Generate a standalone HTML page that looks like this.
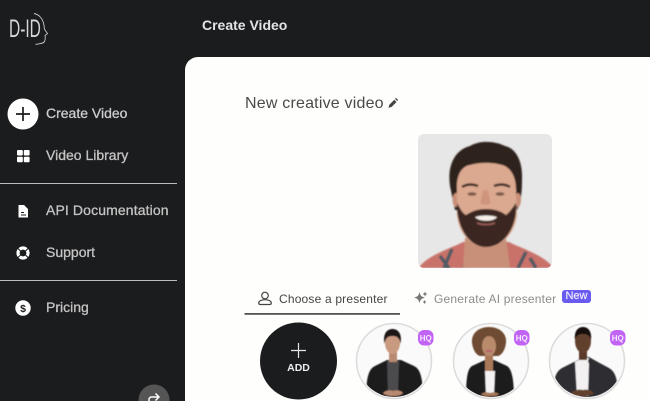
<!DOCTYPE html>
<html lang="en">
<head>
<meta charset="utf-8">
<title>Create Video</title>
<style>
html,body{margin:0;padding:0;width:650px;height:401px;overflow:hidden;background:#1b1c1e}
body{position:relative;font-family:"Liberation Sans",sans-serif}
.t{position:absolute;white-space:nowrap;line-height:16px;z-index:2}
.n{left:46px;font-size:14px;color:#c4c4c4;font-weight:400;-webkit-text-stroke:.3px #c4c4c4}
.panel{position:absolute;left:185px;top:57px;width:465px;height:344px;background:#fefefd;border-top-left-radius:13px}
.hr{position:absolute;left:0;width:177px;height:1px;background:#bdbdbd}
svg.a{position:absolute;left:0;top:0}
</style>
</head>
<body>
<div class="panel"></div>
<div class="hr" style="top:183px"></div>
<div class="hr" style="top:280px"></div>

<div class="t" style="left:9px;top:15px;font-size:25px;line-height:28px;color:#d8d8d8;transform:scaleX(.62);transform-origin:0 0">D-ID</div>
<div class="t" style="left:202px;top:17px;font-size:14px;font-weight:700;color:#e4e4e4">Create Video</div>

<div class="t n" style="top:105px;color:#d0d0d0">Create Video</div>
<div class="t n" style="top:147px">Video Library</div>
<div class="t n" style="top:202px;letter-spacing:.12px">API Documentation</div>
<div class="t n" style="top:244px">Support</div>
<div class="t n" style="top:299px">Pricing</div>

<div class="t" style="left:245px;top:96px;font-size:16px;color:#4a4a4a;letter-spacing:.2px">New creative video</div>
<div class="t" style="left:279px;top:291px;font-size:12px;color:#444;letter-spacing:.18px">Choose a presenter</div>
<div class="t" style="left:434px;top:291px;font-size:12px;color:#8c8c8c;letter-spacing:.2px">Generate AI presenter</div>
<div class="t" style="left:562px;top:290px;width:29px;height:13px;line-height:13px;background:#6a5bf0;border-radius:3px;color:#eeecff;font-size:11px;-webkit-text-stroke:.2px #eeecff;text-align:center">New</div>
<div class="t" style="left:260px;top:361px;width:77px;text-align:center;font-size:10.500px;font-weight:700;color:#eee;line-height:14px">ADD</div>

<svg class="a" width="650" height="401" viewBox="0 0 650 401" xmlns="http://www.w3.org/2000/svg">
<defs>
<clipPath id="port"><rect x="418" y="134" width="134" height="134" rx="6"/></clipPath>
<clipPath id="c1"><circle cx="394" cy="361" r="36"/></clipPath>
<clipPath id="c2"><circle cx="491" cy="361" r="36"/></clipPath>
<clipPath id="c3"><circle cx="587" cy="361" r="36"/></clipPath>
<filter id="s" x="-10%" y="-10%" width="120%" height="120%"><feGaussianBlur stdDeviation=".9"/></filter>
<filter id="s2" x="-10%" y="-10%" width="120%" height="120%"><feGaussianBlur stdDeviation=".5"/></filter>
</defs>

<!-- logo profile -->
<path d="M34 13.500c5 1 9 5 10 12 .3 2 0 3 1 4.500l2.500 3.500-2.500 2c.5 2 .3 4-.5 6-1 2-4 2-9 3" fill="none" stroke="#c9c9c9" stroke-width=".9"/>

<!-- sidebar icons -->
<circle cx="23" cy="114" r="15.500" fill="#fff"/>
<path d="M23 107v14M16 114h14" stroke="#1b1c1e" stroke-width="1.700"/>
<g fill="#fff"><rect x="17" y="150" width="5.800" height="5.500" rx="1"/><rect x="23.800" y="150" width="5.800" height="5.500" rx="1"/><rect x="17" y="156.700" width="5.800" height="5.500" rx="1"/><rect x="23.800" y="156.700" width="5.800" height="5.500" rx="1"/></g>
<path d="M18.500 205h5.500l4 4v8.500h-9.500z" fill="#fff"/><path d="M21 212.500h3M21 215h5" stroke="#1b1c1e" stroke-width=".9"/>
<circle cx="23" cy="253" r="5" fill="none" stroke="#fff" stroke-width="3.200"/>
<g stroke="#1b1c1e" stroke-width="1.100"><path d="M17.500 248l3 3M28.500 248l-3 3M17.500 258l3-3M28.500 258l-3-3"/></g>
<circle cx="23" cy="308" r="7.700" fill="#fff"/>
<text x="23" y="312" font-family="Liberation Sans" font-size="10.500" font-weight="700" fill="#1b1c1e" text-anchor="middle">$</text>
<circle cx="154" cy="400" r="15.500" fill="#555"/>
<path d="M149 403v-3.500c0-1.500 1-2.500 2.500-2.500h7M155.500 393.500l3.500 3.500-3.500 3.500" fill="none" stroke="#fff" stroke-width="1.500"/>

<!-- pencil -->
<path d="M388.500 107.800l.8-3 5-5 2.200 2.200-5 5z M395 98.800l1-.9 2.100 2.100-1 1z" fill="#444"/>

<!-- main portrait -->
<rect x="418" y="134" width="134" height="134" rx="6" fill="#e7e7e7"/>
<g clip-path="url(#port)"><g filter="url(#s)">
<path d="M419 268c4-8 20-16 38-23l6-3h46l6 3c18 7 34 15 38 23z" fill="#c9726a"/>
<path d="M440 256l9 12M452 249l-8 19M526 252l-8 16M530 258l6 10M470 248l-6 20M502 248l6 20" stroke="#4f5a62" stroke-width="3.500"/>
<path d="M463 268l2-30h41l4 30z" fill="#c99079"/>
<path d="M450 186C447 165 455 150 470 146C480 140 495 141 505 146C515 148 523 160 522 180C522 195 520 205 517 210L455 210Z" fill="#2e201b"/>
<ellipse cx="456" cy="200" rx="3.500" ry="7" fill="#c99079"/><ellipse cx="518" cy="200" rx="3" ry="7" fill="#c99079"/>
<path d="M457 190C456 175 462 166 470 165C480 162 495 162 505 166C512 170 516 178 516 190L517 215C515 235 500 247 486 247C472 247 459 235 457 215Z" fill="#dba98f"/>
<path d="M457 203C460 208 462 213 466 215C472 211 478 209 486 209C494 209 501 211 506 215C510 212 513 207 516 203C518 225 505 247 486 247C468 247 456 225 457 203Z" fill="#3b2720"/>
<path d="M475 217C481 215 491 215 497 217C494 222 479 222 475 217Z" fill="#f6eee8"/>
<path d="M477 223c5 2 13 2 18 0" stroke="#a0605a" stroke-width="1.500" fill="none"/>
<path d="M462 187c5-3 11-3 16-1M494 186c5-2 11-2 16 1" stroke="#3b2820" stroke-width="2.400" fill="none"/>
<ellipse cx="472" cy="194" rx="4.500" ry="1.700" fill="#7a5a4a"/><ellipse cx="500" cy="194" rx="4.500" ry="1.700" fill="#7a5a4a"/>
<path d="M483 190c-1 6-3 11-2 14 2 1 7 1 9 0 1-3-1-8-2-14z" fill="#cf957c"/>
</g></g>

<!-- tab -->
<circle cx="265" cy="295.500" r="3.300" fill="none" stroke="#444" stroke-width="1.200"/>
<path d="M260.500 304.500c-1.300 0-1.800-.7-1.800-1.500 0-2 2.500-3.300 6.300-3.300s6.300 1.300 6.300 3.300c0 .8-.5 1.500-1.800 1.500z" fill="none" stroke="#444" stroke-width="1.200"/>
<rect x="244.500" y="313" width="155.500" height="1.800" fill="#555"/>
<path d="M419.500 292c.8 3.600 1.900 4.800 5.500 5.600-3.600.8-4.700 2-5.500 5.600-.8-3.600-1.900-4.800-5.500-5.600 3.600-.8 4.700-2 5.500-5.600z" fill="#777"/>
<path d="M425 291.500l.8 1.700 1.700.8-1.700.8-.8 1.700-.8-1.700-1.700-.8 1.700-.8zM424.500 300l.7 1.400 1.300.6-1.300.6-.7 1.400-.7-1.400-1.300-.6 1.300-.6z" fill="#777"/>

<!-- add -->
<circle cx="298.500" cy="361" r="38.500" fill="#1b1c1e"/>
<path d="M298.500 343v15M291 350.500h15" stroke="#e6e6e6" stroke-width="1.200"/>

<!-- presenter 1 -->
<circle cx="394" cy="361" r="37.500" fill="#fbfafa" stroke="#dcdcdc" stroke-width="1.600"/>
<g clip-path="url(#c1)"><g filter="url(#s2)">
<path d="M366 400c0-20 2-31 9-34l12-6h14l13 6c7 3 9 14 9 34z" fill="#1b1a1b"/>
<path d="M387 361h12l-1 32h-10z" fill="#4c4c4e"/>
<rect x="389" y="350" width="8" height="12" fill="#b98a72"/>
<ellipse cx="392.500" cy="343" rx="7.500" ry="11" fill="#c89a80"/>
<path d="M384.500 344c-2-11 3-15 8-15s10 4 8 15c-1-6-3-8-8-8s-7 2-8 8z" fill="#1d1715"/>
<path d="M383 393c3-3 7-3 10-2 4-1 7-1 10 2-3 4-17 4-20 0z" fill="#b98a72"/>
</g></g>
<!-- presenter 2 -->
<circle cx="491" cy="361" r="37.500" fill="#fbfafa" stroke="#dcdcdc" stroke-width="1.600"/>
<g clip-path="url(#c2)"><g filter="url(#s2)">
<path d="M466 400c0-20 1-31 6-34l13-6h9l13 6c5 3 7 14 7 34z" fill="#1b1a1b"/>
<path d="M485 371h10l-1 25h-8z" fill="#f4f2f2"/>
<path d="M472 343c-1-10 7-16 17-16 10 0 18 6 17 16-1 7-4 12-8 13h-18c-4-1-7-6-8-13z" fill="#6e4c30"/>
<rect x="485" y="353" width="8" height="18" fill="#a87858"/>
<ellipse cx="489" cy="346" rx="7" ry="10" fill="#b98a6c"/>
<path d="M486 351h6" stroke="#b5546a" stroke-width="1.500"/>
<path d="M481 394c3-2 6-2 9-1 3-1 6-1 9 1-3 3-15 3-18 0z" fill="#a87858"/>
</g></g>
<!-- presenter 3 -->
<circle cx="587" cy="361" r="37.500" fill="#fbfafa" stroke="#dcdcdc" stroke-width="1.600"/>
<g clip-path="url(#c3)"><g filter="url(#s2)">
<path d="M553 400c0-20 2-28 9-32l14-7 7-4h6l7 4 13 7c7 4 9 12 9 32z" fill="#2f2f31"/>
<path d="M575 362l7-4h7l-1 3 1 3-1 32h-11z" fill="#f2f0f0"/>
<rect x="579" y="349" width="8" height="11" fill="#5a3a2a"/>
<ellipse cx="583" cy="341" rx="8" ry="12" fill="#62402e"/>
<path d="M575 340c-1-9 3-13 8-13s9 4 8 13c-1-4-3-6-8-6s-7 2-8 6z" fill="#151110"/>
<path d="M571 393c3-3 8-4 12-3 4-1 8 0 11 3-3 4-20 4-23 0z" fill="#62402e"/>
</g></g>

<!-- HQ badges -->
<g font-family="Liberation Sans" font-size="8" font-weight="700" fill="#f6e8ff" text-anchor="middle">
<rect x="418" y="330" width="15.500" height="15.500" rx="6" fill="#c164f5"/><text x="425.700" y="340.800">HQ</text>
<rect x="514" y="330" width="15.500" height="15.500" rx="6" fill="#c164f5"/><text x="521.700" y="340.800">HQ</text>
<rect x="610" y="330" width="15.500" height="15.500" rx="6" fill="#c164f5"/><text x="617.700" y="340.800">HQ</text>
</g>
</svg>
</body>
</html>
